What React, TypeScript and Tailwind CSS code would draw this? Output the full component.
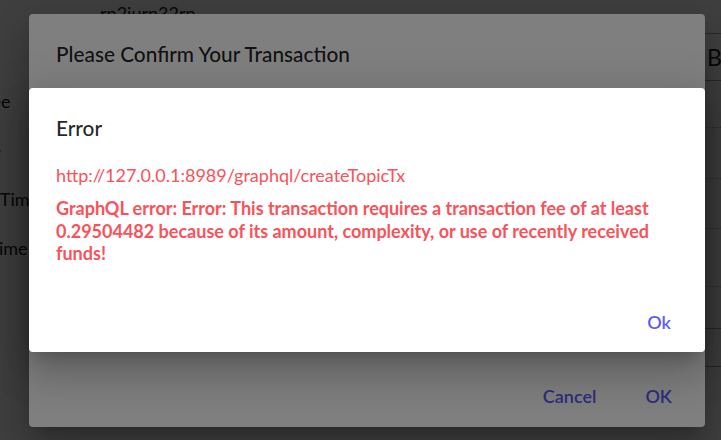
export default function App() {
  // rows of the page that sits behind both dialogs
  const labels = [
    { text: "Fee", cls: "-ml-[18px]" },
    { text: "Type", cls: "-ml-[37px]" },
    { text: "Start Time", cls: "-ml-[42px]" },
    { text: "End Time", cls: "-ml-[46px]" },
  ];

  return (
    <div className="relative h-[440px] w-[721px] overflow-hidden bg-white font-['Lato',sans-serif] text-[#212121]">
      {/* page content */}
      <div className="flex h-[33px] pl-[100px] pt-[1px] text-[18px] leading-[24px]">rp2iurp32rp</div>
      <div className="flex">
        <div className="mt-[44px] flex flex-col text-[18px]">
          {labels.map((l) => (
            <div key={l.text} className={`flex h-[49px] items-center whitespace-nowrap ${l.cls}`}>
              {l.text}
            </div>
          ))}
        </div>
        <div className="ml-auto w-[40px] whitespace-nowrap text-[23px]">
          <div className="flex h-[48px] items-center border-y border-[#a0a0a0] pl-[26px] tracking-[4px]">Balance</div>
          <div className="h-[47px] border-b border-dotted border-[#b0b0b0]" />
          <div className="h-[51px] border-b border-dotted border-[#b0b0b0]" />
          <div className="h-[50px] border-b border-dotted border-[#b0b0b0]" />
          <div className="h-[58px] border-b border-dotted border-[#b0b0b0]" />
          <div className="h-[42px] border-b border-[#a0a0a0]" />
          <div className="h-[38px] border-b border-[#a0a0a0]" />
        </div>
      </div>

      {/* first dialog */}
      <div className="absolute inset-0 bg-black/50" />
      <div className="absolute left-[29px] top-[14px] flex h-[413px] w-[676px] flex-col rounded-[4px] bg-white shadow-[0_11px_15px_-7px_rgba(0,0,0,0.2),0_24px_38px_3px_rgba(0,0,0,0.14),0_9px_46px_8px_rgba(0,0,0,0.12)]">
        <h2 className="px-[27px] pt-[24px] text-[20.8px] font-medium leading-[32px] text-black/[0.87]">
          Please Confirm Your Transaction
        </h2>
        <div className="mt-auto flex items-center justify-end gap-[33px] pb-[19px] pr-[25px]">
          <button className="px-[8px] text-[18px] font-semibold leading-[24px] text-[#5b5bf8]">Cancel</button>
          <button className="px-[8px] text-[18px] font-semibold leading-[24px] text-[#5b5bf8]">OK</button>
        </div>
      </div>

      {/* error dialog */}
      <div className="absolute inset-0 bg-black/50" />
      <div className="absolute left-[29px] top-[88px] flex h-[264px] w-[676px] flex-col rounded-[4px] bg-white shadow-[0_11px_15px_-7px_rgba(0,0,0,0.2),0_24px_38px_3px_rgba(0,0,0,0.14),0_9px_46px_8px_rgba(0,0,0,0.12)]">
        <h2 className="px-[27px] pt-[24px] text-[20.8px] font-medium leading-[32px] text-black/[0.87]">Error</h2>
        <div className="px-[27px] text-[#f9525a]">
          <p className="mt-[19px] text-[18px] leading-[24px]">http://127.0.0.1:8989/graphql/createTopicTx</p>
          <p className="mt-[10px] text-[18px] font-bold leading-[22.5px]">
            GraphQL error: Error: This transaction requires a transaction fee of at least 0.29504482 because of its
            amount, complexity, or use of recently received funds!
          </p>
        </div>
        <div className="mt-auto flex justify-end pb-[18px] pr-[26px]">
          <button className="px-[8px] text-[18px] font-semibold leading-[24px] text-[#5b5bf8]">Ok</button>
        </div>
      </div>
    </div>
  );
}
